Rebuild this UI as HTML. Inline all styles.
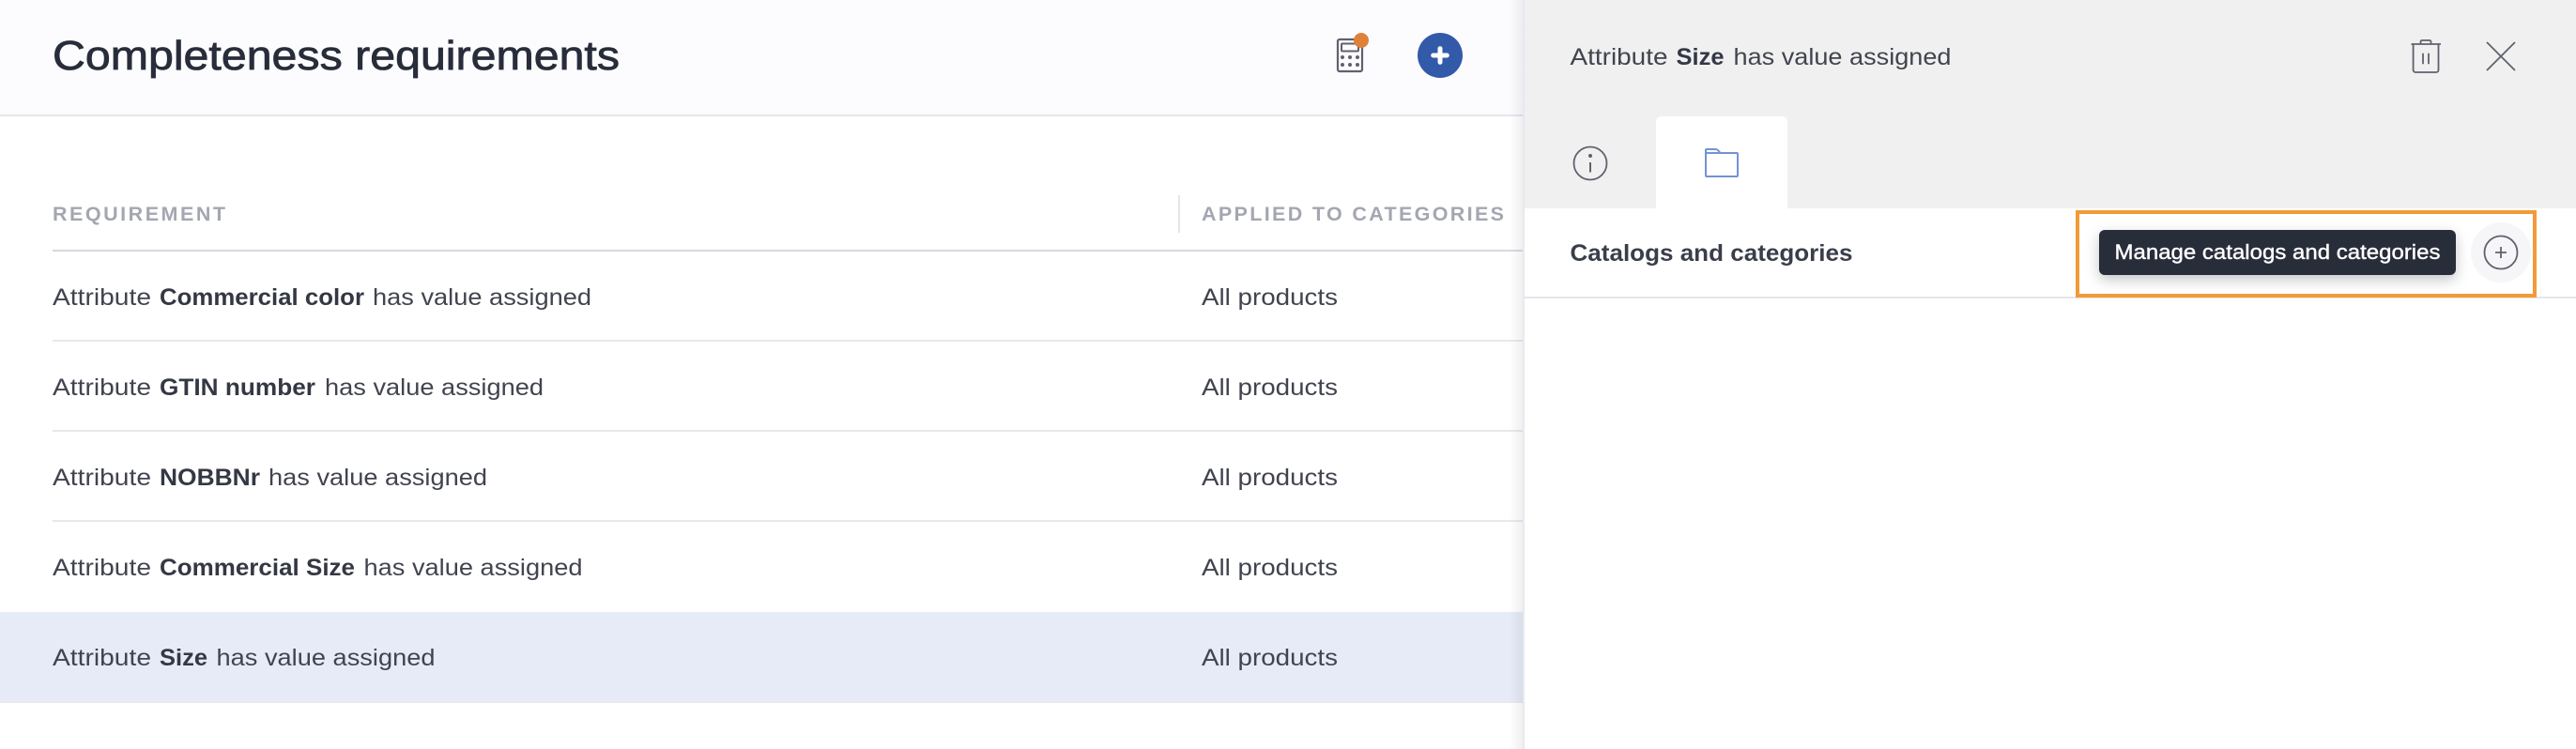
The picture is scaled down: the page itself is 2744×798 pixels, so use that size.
<!DOCTYPE html>
<html lang="en">
<head>
<meta charset="utf-8">
<title>Completeness requirements</title>
<style>
html,body{margin:0;padding:0;background:#fff;width:2744px;height:798px;overflow:hidden}
svg{display:block}
text{font-family:"Liberation Sans",sans-serif}
.r{font-size:25px;fill:#41444f}
.b{font-size:25px;font-weight:700;fill:#343844}
.h{font-size:21.500px;font-weight:700;fill:#a4a6b1}
.i{fill:none;stroke:#5f616d;stroke-width:1.800}
</style>
</head>
<body>
<svg width="2744" height="798" viewBox="0 0 2744 798" xmlns="http://www.w3.org/2000/svg">
<defs>
<linearGradient id="sh" x1="0" x2="1" y1="0" y2="0">
<stop offset="0" stop-color="#50506e" stop-opacity="0"/>
<stop offset="1" stop-color="#50506e" stop-opacity=".09"/>
</linearGradient>
</defs>
<rect width="2744" height="798" fill="#fff"/>

<!-- Left header -->
<rect x="0" y="0" width="1622" height="122" fill="#fcfcfe"/>
<rect x="0" y="122" width="1622" height="2" fill="#e5e5ea"/>
<text x="56" y="74" font-size="44" fill="#282d3a" stroke="#282d3a" stroke-width=".8" textLength="604" lengthAdjust="spacingAndGlyphs">Completeness requirements</text>

<!-- Calculator icon -->
<rect x="1425" y="42" width="26" height="34" rx="2" fill="none" stroke="#5f616d" stroke-width="2.200"/>
<rect x="1429" y="46.500" width="18" height="8" rx="1" fill="none" stroke="#5f616d" stroke-width="2"/>
<g fill="#5f616d">
<circle cx="1430" cy="61" r="2"/><circle cx="1438" cy="61" r="2"/><circle cx="1446" cy="61" r="2"/>
<circle cx="1430" cy="69" r="2"/><circle cx="1438" cy="69" r="2"/><circle cx="1446" cy="69" r="2"/>
</g>
<circle cx="1450" cy="43" r="8" fill="#e0813a"/>

<!-- Add button -->
<circle cx="1534" cy="59" r="24" fill="#3359a9"/>
<path d="M1526.700 59H1541.300M1534 51.700V66.300" stroke="#fff" stroke-width="5" stroke-linecap="round" fill="none"/>

<!-- Table header -->
<text class="h" x="56" y="235" textLength="184" lengthAdjust="spacing">REQUIREMENT</text>
<rect x="1255" y="208" width="2" height="40" fill="#e5e5ea"/>
<text class="h" x="1280" y="235" textLength="322" lengthAdjust="spacing">APPLIED TO CATEGORIES</text>
<rect x="56" y="266" width="1566" height="2" fill="#d9d9e0"/>

<!-- Selected row -->
<rect x="0" y="652" width="1622" height="95" fill="#e6ebf7"/>

<!-- Row dividers -->
<rect x="56" y="362" width="1566" height="2" fill="#e8e8ed"/>
<rect x="56" y="458" width="1566" height="2" fill="#e8e8ed"/>
<rect x="56" y="554" width="1566" height="2" fill="#e8e8ed"/>
<rect x="0" y="747" width="1622" height="2" fill="#e8e8ed"/>

<!-- Rows -->
<text class="r" x="56" y="325" textLength="105" lengthAdjust="spacingAndGlyphs">Attribute</text>
<text class="b" x="170" y="325" textLength="218" lengthAdjust="spacingAndGlyphs">Commercial color</text>
<text class="r" x="397" y="325" textLength="233" lengthAdjust="spacingAndGlyphs">has value assigned</text>
<text class="r" x="1280" y="325" textLength="145" lengthAdjust="spacingAndGlyphs">All products</text>

<text class="r" x="56" y="421" textLength="105" lengthAdjust="spacingAndGlyphs">Attribute</text>
<text class="b" x="170" y="421" textLength="166" lengthAdjust="spacingAndGlyphs">GTIN number</text>
<text class="r" x="346" y="421" textLength="233" lengthAdjust="spacingAndGlyphs">has value assigned</text>
<text class="r" x="1280" y="421" textLength="145" lengthAdjust="spacingAndGlyphs">All products</text>

<text class="r" x="56" y="517" textLength="105" lengthAdjust="spacingAndGlyphs">Attribute</text>
<text class="b" x="170" y="517" textLength="107" lengthAdjust="spacingAndGlyphs">NOBBNr</text>
<text class="r" x="286" y="517" textLength="233" lengthAdjust="spacingAndGlyphs">has value assigned</text>
<text class="r" x="1280" y="517" textLength="145" lengthAdjust="spacingAndGlyphs">All products</text>

<text class="r" x="56" y="613" textLength="105" lengthAdjust="spacingAndGlyphs">Attribute</text>
<text class="b" x="170" y="613" textLength="208" lengthAdjust="spacingAndGlyphs">Commercial Size</text>
<text class="r" x="387.500" y="613" textLength="233" lengthAdjust="spacingAndGlyphs">has value assigned</text>
<text class="r" x="1280" y="613" textLength="145" lengthAdjust="spacingAndGlyphs">All products</text>

<text class="r" x="56" y="709" textLength="105" lengthAdjust="spacingAndGlyphs">Attribute</text>
<text class="b" x="170" y="709" textLength="51" lengthAdjust="spacingAndGlyphs">Size</text>
<text class="r" x="230.500" y="709" textLength="233" lengthAdjust="spacingAndGlyphs">has value assigned</text>
<text class="r" x="1280" y="709" textLength="145" lengthAdjust="spacingAndGlyphs">All products</text>

<!-- Panel shadow -->
<rect x="1608" y="0" width="14" height="798" fill="url(#sh)"/>
<rect x="1622" y="0" width="2" height="798" fill="#e8e8ed"/>

<!-- Right panel -->
<rect x="1624" y="0" width="1120" height="798" fill="#fff"/>
<rect x="1624" y="0" width="1120" height="222" fill="#f0f0f0"/>
<path d="M1764 222V130a6 6 0 0 1 6-6H1898a6 6 0 0 1 6 6V222Z" fill="#fff"/>

<text class="r" x="1672.500" y="69" textLength="104" lengthAdjust="spacingAndGlyphs">Attribute</text>
<text class="b" x="1785.500" y="69" textLength="51" lengthAdjust="spacingAndGlyphs">Size</text>
<text class="r" x="1846.500" y="69" textLength="232" lengthAdjust="spacingAndGlyphs">has value assigned</text>

<!-- Trash -->
<path class="i" d="M2568.500 47H2600M2578.500 47V44.500a1.500 1.500 0 0 1 1.500-1.500H2588a1.500 1.500 0 0 1 1.500 1.500V47M2570.600 47V74.500a2.500 2.500 0 0 0 2.500 2.500H2595a2.500 2.500 0 0 0 2.500-2.500V47M2581 56.700V68.300M2587 56.700V68.300"/>
<!-- Close -->
<path class="i" d="M2649 45L2679 75M2679 45L2649 75"/>

<!-- Info tab icon -->
<circle class="i" cx="1694" cy="174" r="17.500"/>
<circle cx="1694" cy="166" r="2" fill="#5f616d"/>
<rect x="1693" y="173" width="2" height="10.500" fill="#5f616d"/>

<!-- Folder tab icon -->
<path d="M1817 160a1 1 0 0 1 1-1H1827.500Q1829 159 1830 160L1832.500 163H1850a1 1 0 0 1 1 1V187a1 1 0 0 1-1 1H1818a1 1 0 0 1-1-1ZM1817 163H1832.500" fill="none" stroke="#7393d3" stroke-width="2"/>

<!-- Catalogs section -->
<text x="1672.500" y="278" font-size="25" font-weight="700" fill="#3a3e4a" textLength="301" lengthAdjust="spacingAndGlyphs">Catalogs and categories</text>
<rect x="1624" y="316" width="1120" height="2" fill="#e5e5ea"/>

<!-- Tooltip -->
<rect x="2236" y="245" width="380" height="48" rx="6" fill="#282d3a" style="filter:drop-shadow(0 5px 7px rgba(40,45,58,.28))"/>
<text x="2252.500" y="276" font-size="22.500" fill="#fff" stroke="#fff" stroke-width=".4" textLength="347" lengthAdjust="spacingAndGlyphs">Manage catalogs and categories</text>

<!-- Round plus button -->
<circle cx="2664" cy="269" r="32" fill="#f6f6f8"/>
<circle class="i" cx="2664" cy="269" r="17.500"/>
<path class="i" d="M2658 269H2670M2664 263V275"/>

<!-- Orange highlight -->
<rect x="2213" y="226" width="487" height="89" fill="none" stroke="#f39a38" stroke-width="4"/>
</svg>
</body>
</html>
